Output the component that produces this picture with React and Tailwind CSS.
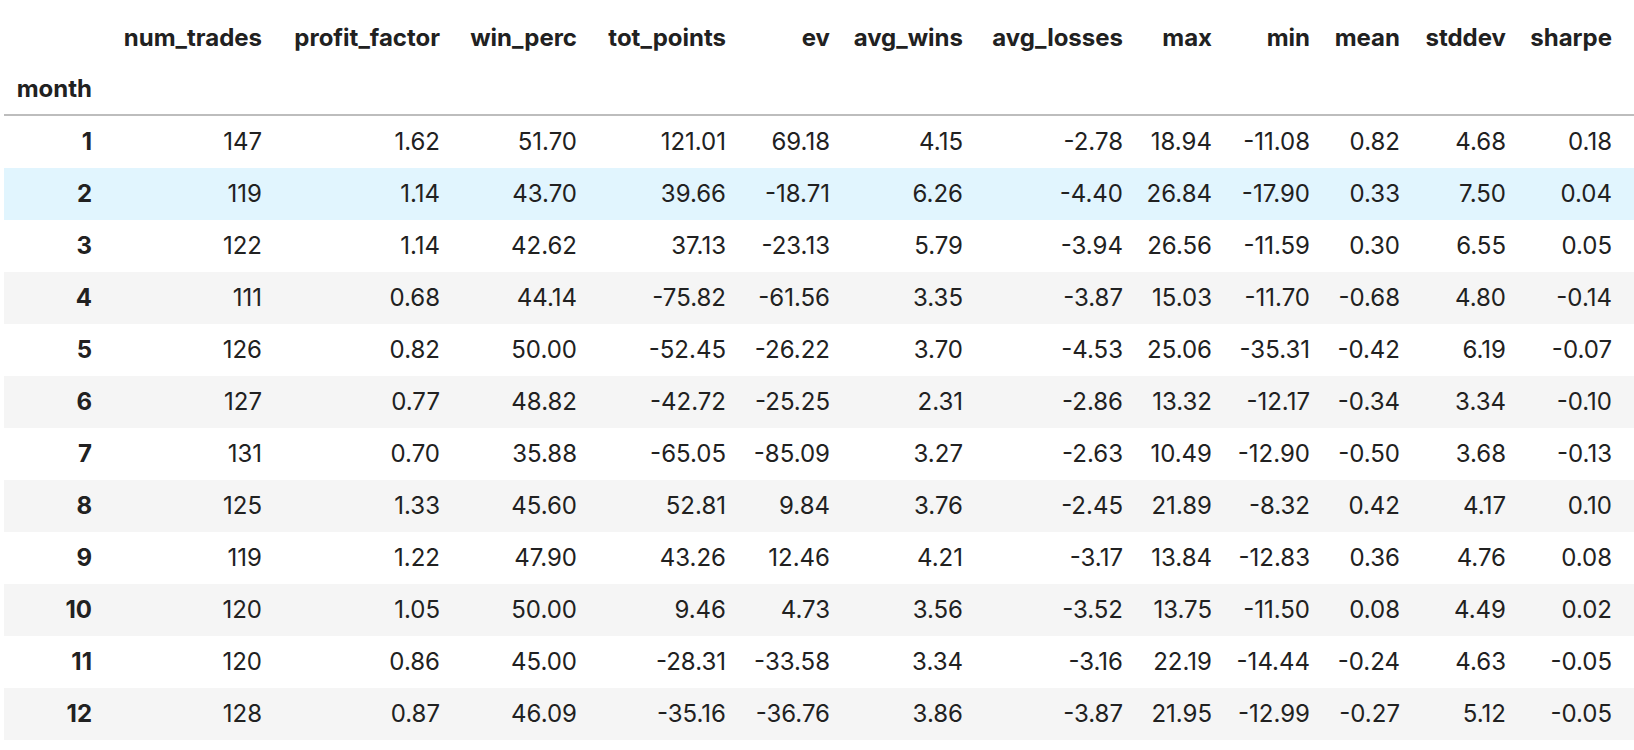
import React from 'react';

const columns = [
  'num_trades', 'profit_factor', 'win_perc', 'tot_points', 'ev', 'avg_wins',
  'avg_losses', 'max', 'min', 'mean', 'stddev', 'sharpe'
];

const rows = [
  [1, '147', '1.62', '51.70', '121.01', '69.18', '4.15', '-2.78', '18.94', '-11.08', '0.82', '4.68', '0.18'],
  [2, '119', '1.14', '43.70', '39.66', '-18.71', '6.26', '-4.40', '26.84', '-17.90', '0.33', '7.50', '0.04'],
  [3, '122', '1.14', '42.62', '37.13', '-23.13', '5.79', '-3.94', '26.56', '-11.59', '0.30', '6.55', '0.05'],
  [4, '111', '0.68', '44.14', '-75.82', '-61.56', '3.35', '-3.87', '15.03', '-11.70', '-0.68', '4.80', '-0.14'],
  [5, '126', '0.82', '50.00', '-52.45', '-26.22', '3.70', '-4.53', '25.06', '-35.31', '-0.42', '6.19', '-0.07'],
  [6, '127', '0.77', '48.82', '-42.72', '-25.25', '2.31', '-2.86', '13.32', '-12.17', '-0.34', '3.34', '-0.10'],
  [7, '131', '0.70', '35.88', '-65.05', '-85.09', '3.27', '-2.63', '10.49', '-12.90', '-0.50', '3.68', '-0.13'],
  [8, '125', '1.33', '45.60', '52.81', '9.84', '3.76', '-2.45', '21.89', '-8.32', '0.42', '4.17', '0.10'],
  [9, '119', '1.22', '47.90', '43.26', '12.46', '4.21', '-3.17', '13.84', '-12.83', '0.36', '4.76', '0.08'],
  [10, '120', '1.05', '50.00', '9.46', '4.73', '3.56', '-3.52', '13.75', '-11.50', '0.08', '4.49', '0.02'],
  [11, '120', '0.86', '45.00', '-28.31', '-33.58', '3.34', '-3.16', '22.19', '-14.44', '-0.24', '4.63', '-0.05'],
  [12, '128', '0.87', '46.09', '-35.16', '-36.76', '3.86', '-3.87', '21.95', '-12.99', '-0.27', '5.12', '-0.05']
];

// column widths measured from the screenshot (index column first)
const grid = 'grid grid-cols-[100px_170px_178px_137px_149px_104px_133px_160px_89px_98px_90px_106px_116px]';

function Cell({ children, bold, last }) {
  return (
    <div
      className={
        'flex items-center justify-end whitespace-nowrap ' +
        (last ? 'pr-[22px] ' : 'pr-3 ') +
        (bold ? 'font-bold' : '')
      }
    >
      {children}
    </div>
  );
}

function App() {
  return (
    <div
      className="w-[1634px] h-[750px] overflow-hidden bg-white pt-3 pl-1 text-[24px] text-[#212121]"
      style={{ fontFamily: 'Inter, "Noto Sans", sans-serif' }}
    >
      <div className={grid + ' h-[52px]'}>
        <Cell />
        {columns.map((c, i) => (
          <Cell key={c} bold last={i === columns.length - 1}>{c}</Cell>
        ))}
      </div>
      <div className={grid + ' h-[52px] border-b-2 border-[#bdbdbd]'}>
        <Cell bold>month</Cell>
        {columns.map((c, i) => (
          <Cell key={c} last={i === columns.length - 1} />
        ))}
      </div>
      {rows.map((r, idx) => {
        let bg = 'bg-white';
        if (idx === 1) bg = 'bg-[#e1f5fe]';
        else if (idx % 2 === 1) bg = 'bg-[#f5f5f5]';
        return (
          <div key={r[0]} className={grid + ' h-[52px] ' + bg}>
            <Cell bold>{r[0]}</Cell>
            {r.slice(1).map((v, i) => (
              <Cell key={i} last={i === r.length - 2}>{v}</Cell>
            ))}
          </div>
        );
      })}
    </div>
  );
}

export default App;
